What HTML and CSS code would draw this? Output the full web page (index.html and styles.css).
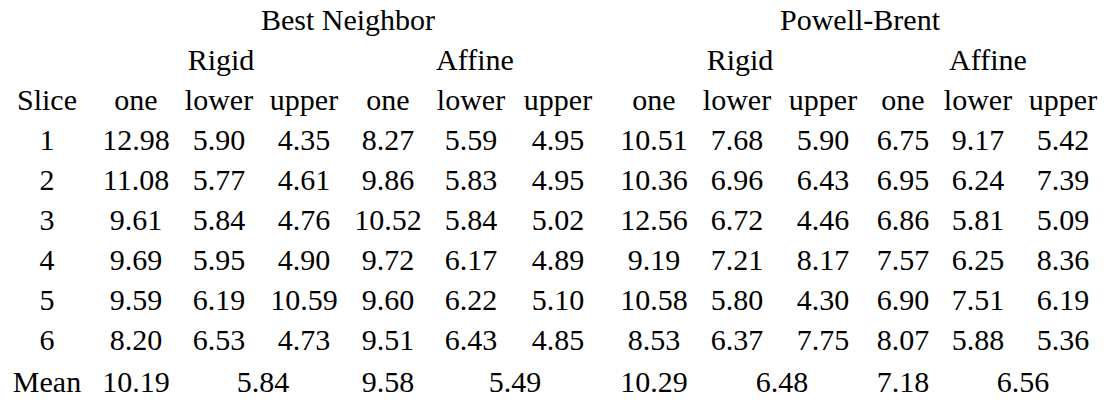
FILE: index.html
```html
<!DOCTYPE html>
<html>
    <head>
        <title>Registration error by slice</title>
        <link rel="stylesheet" href="styles.css">
    </head>
    <body>
        <div class="results">
            <div class="row">
                <span class="cell c0"></span>
                <span class="cell span6">Best Neighbor</span>
                <span class="cell span6b group">Powell-Brent</span>
            </div>
            <div class="row">
                <span class="cell c0"></span>
                <span class="cell rigidA">Rigid</span>
                <span class="cell affineA">Affine</span>
                <span class="cell rigidB group">Rigid</span>
                <span class="cell affineB">Affine</span>
            </div>
            <div class="row">
                <span class="cell c0">Slice</span>
                <span class="cell c1">one</span><span class="cell c2">lower</span><span class="cell c3">upper</span>
                <span class="cell c4">one</span><span class="cell c5">lower</span><span class="cell c6">upper</span>
                <span class="cell c7 group">one</span><span class="cell c8">lower</span><span class="cell c9">upper</span>
                <span class="cell c10">one</span><span class="cell c11">lower</span><span class="cell c12">upper</span>
            </div>
            <div class="row">
                <span class="cell c0">1</span>
                <span class="cell c1">12.98</span><span class="cell c2">5.90</span><span class="cell c3">4.35</span>
                <span class="cell c4">8.27</span><span class="cell c5">5.59</span><span class="cell c6">4.95</span>
                <span class="cell c7 group">10.51</span><span class="cell c8">7.68</span><span class="cell c9">5.90</span>
                <span class="cell c10">6.75</span><span class="cell c11">9.17</span><span class="cell c12">5.42</span>
            </div>
            <div class="row">
                <span class="cell c0">2</span>
                <span class="cell c1">11.08</span><span class="cell c2">5.77</span><span class="cell c3">4.61</span>
                <span class="cell c4">9.86</span><span class="cell c5">5.83</span><span class="cell c6">4.95</span>
                <span class="cell c7 group">10.36</span><span class="cell c8">6.96</span><span class="cell c9">6.43</span>
                <span class="cell c10">6.95</span><span class="cell c11">6.24</span><span class="cell c12">7.39</span>
            </div>
            <div class="row">
                <span class="cell c0">3</span>
                <span class="cell c1">9.61</span><span class="cell c2">5.84</span><span class="cell c3">4.76</span>
                <span class="cell c4">10.52</span><span class="cell c5">5.84</span><span class="cell c6">5.02</span>
                <span class="cell c7 group">12.56</span><span class="cell c8">6.72</span><span class="cell c9">4.46</span>
                <span class="cell c10">6.86</span><span class="cell c11">5.81</span><span class="cell c12">5.09</span>
            </div>
            <div class="row">
                <span class="cell c0">4</span>
                <span class="cell c1">9.69</span><span class="cell c2">5.95</span><span class="cell c3">4.90</span>
                <span class="cell c4">9.72</span><span class="cell c5">6.17</span><span class="cell c6">4.89</span>
                <span class="cell c7 group">9.19</span><span class="cell c8">7.21</span><span class="cell c9">8.17</span>
                <span class="cell c10">7.57</span><span class="cell c11">6.25</span><span class="cell c12">8.36</span>
            </div>
            <div class="row">
                <span class="cell c0">5</span>
                <span class="cell c1">9.59</span><span class="cell c2">6.19</span><span class="cell c3">10.59</span>
                <span class="cell c4">9.60</span><span class="cell c5">6.22</span><span class="cell c6">5.10</span>
                <span class="cell c7 group">10.58</span><span class="cell c8">5.80</span><span class="cell c9">4.30</span>
                <span class="cell c10">6.90</span><span class="cell c11">7.51</span><span class="cell c12">6.19</span>
            </div>
            <div class="row">
                <span class="cell c0">6</span>
                <span class="cell c1">8.20</span><span class="cell c2">6.53</span><span class="cell c3">4.73</span>
                <span class="cell c4">9.51</span><span class="cell c5">6.43</span><span class="cell c6">4.85</span>
                <span class="cell c7 group">8.53</span><span class="cell c8">6.37</span><span class="cell c9">7.75</span>
                <span class="cell c10">8.07</span><span class="cell c11">5.88</span><span class="cell c12">5.36</span>
            </div>
            <div class="row mean">
                <span class="cell c0">Mean</span>
                <span class="cell c1">10.19</span><span class="cell c23">5.84</span>
                <span class="cell c4">9.58</span><span class="cell c56">5.49</span>
                <span class="cell c7 group">10.29</span><span class="cell c89">6.48</span>
                <span class="cell c10">7.18</span><span class="cell c1112">6.56</span>
            </div>
        </div>
    </body>
</html>
```

FILE: styles.css
```css
*{
    margin: 0;
    padding: 0;
    box-sizing: border-box;
}
body{
    background: #fff;
    color: #000;
}
.results{
    font-family: "Liberation Serif";
    font-size: 30px;
    width: 1108px;
}
.row{
    display: flex;
    height: 40px;
    line-height: 40px;
}
.row.mean{
    margin-top: 2px;
}
.cell{
    flex: none;
    text-align: center;
    white-space: nowrap;
    font-family: "Liberation Serif";
}
.group{
    padding-left: 10px;
}
.c0{ width: 94px; }
.c1{ width: 84px; }
.c2{ width: 82px; }
.c3{ width: 88px; }
.c4{ width: 80px; }
.c5{ width: 86px; }
.c6{ width: 88px; }
.c7{ width: 94px; }
.c8{ width: 82px; }
.c9{ width: 90px; }
.c10{ width: 70px; }
.c11{ width: 80px; }
.c12{ width: 90px; }
.c23{ width: 170px; }
.c56{ width: 174px; }
.c89{ width: 172px; }
.c1112{ width: 170px; }
.span6{ width: 508px; }
.span6b{ width: 506px; }
.rigidA{ width: 254px; }
.affineA{ width: 254px; }
.rigidB{ width: 266px; }
.affineB{ width: 240px; }
```
